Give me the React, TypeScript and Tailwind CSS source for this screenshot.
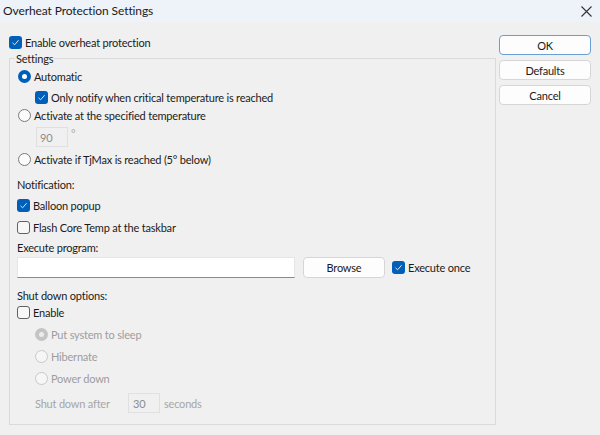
import React from "react";

const Check = ({ checked = false, disabled = false }: { checked?: boolean; disabled?: boolean }) => {
  if (checked) {
    return (
      <span className="flex h-[13px] w-[13px] shrink-0 items-center justify-center rounded-[3px] bg-[#005fb8]">
        <svg width="9" height="9" viewBox="0 0 9 9" fill="none">
          <path d="M1.5 4.8 L3.6 6.8 L7.6 2.2" stroke="#dbe8f5" strokeWidth="1" />
        </svg>
      </span>
    );
  }
  return (
    <span
      className={
        disabled
          ? "h-[13px] w-[13px] shrink-0 rounded-[3px] border border-[#c6c6c6] bg-[#f5f5f5]"
          : "h-[13px] w-[13px] shrink-0 rounded-[3px] border border-[#616161] bg-[#f7f7f7]"
      }
    />
  );
};

const Radio = ({ checked = false, disabled = false }: { checked?: boolean; disabled?: boolean }) => {
  if (checked && !disabled) {
    return (
      <span className="flex h-[13px] w-[13px] shrink-0 items-center justify-center rounded-full bg-[#005fb8]">
        <span className="h-[5px] w-[5px] rounded-full bg-white" />
      </span>
    );
  }
  if (checked && disabled) {
    return (
      <span className="flex h-[13px] w-[13px] shrink-0 items-center justify-center rounded-full bg-[#c4c4c4]">
        <span className="h-[5px] w-[5px] rounded-full bg-[#ececec]" />
      </span>
    );
  }
  return (
    <span
      className={
        disabled
          ? "h-[13px] w-[13px] shrink-0 rounded-full border border-[#c8c8c8] bg-[#f6f6f6]"
          : "h-[13px] w-[13px] shrink-0 rounded-full border border-[#7a7a7a] bg-[#fbfbfb]"
      }
    />
  );
};

const Row = ({ children, className = "" }: { children: React.ReactNode; className?: string }) => (
  <div className={`flex h-[16px] items-center gap-[3px] ${className}`}>{children}</div>
);

const Button = ({ label, primary = false }: { label: string; primary?: boolean }) => (
  <div
    className={
      primary
        ? "flex h-[20px] w-[92px] items-center justify-center rounded-[4px] border border-[#6a9fd6] bg-[#fdfdfd] text-[#1b1b1b]"
        : "flex h-[20px] w-[92px] items-center justify-center rounded-[4px] border border-[#d6d6d6] bg-[#fdfdfd] text-[#1b1b1b]"
    }
  >
    {label}
  </div>
);

export default function App() {
  return (
    <div className="flex h-[435px] w-[600px] flex-col overflow-hidden bg-[#f0f0f0] font-['Lato','Noto_Sans',sans-serif] text-[11px] leading-none tracking-[-0.2px] text-[#1b1b1b]">
      {/* title bar */}
      <div className="flex h-[22px] shrink-0 items-center justify-between bg-[#eef2f9] pl-[3px] pr-[8px]">
        <span className="text-[12px] tracking-[-0.1px]">Overheat Protection Settings</span>
        <svg width="11" height="11" viewBox="0 0 11 11">
          <path d="M0.5 0.5 L10.5 10.5 M10.5 0.5 L0.5 10.5" stroke="#333" strokeWidth="1.1" />
        </svg>
      </div>

      <div className="flex">
        {/* LEFT */}
        <div className="w-[496px] pl-[9px]">
          <Row className="mt-[12px]">
            <Check checked />
            <span>Enable overheat protection</span>
          </Row>

          <div className="relative mt-[8px] h-[367px] border border-[#dadada] pl-[7px] pt-[9px]">
            <span className="absolute left-[5px] top-[-8px] bg-[#f0f0f0] px-[1px] leading-[16px]">Settings</span>

            <Row className="ml-[1px]">
              <Radio checked />
              <span>Automatic</span>
            </Row>
            <Row className="ml-[18px] mt-[5px]">
              <Check checked />
              <span>Only notify when critical temperature is reached</span>
            </Row>
            <Row className="ml-[1px] mt-[2px]">
              <Radio />
              <span>Activate at the specified temperature</span>
            </Row>
            <div className="ml-[19px] mt-[4px] flex h-[20px] items-start">
              <div className="flex h-[20px] w-[32px] items-center border border-[#e0e0e0] bg-[#f0f0f0] pl-[3px] text-[#8c8c8c]">
                90
              </div>
              <span className="ml-[3px] mt-[1px] text-[#a8a8a8]">°</span>
            </div>
            <Row className="ml-[1px] mt-[4px]">
              <Radio />
              <span>Activate if TjMax is reached (5° below)</span>
            </Row>

            <Row className="mt-[9px]">
              <span>Notification:</span>
            </Row>
            <Row className="mt-[5px]">
              <Check checked />
              <span>Balloon popup</span>
            </Row>
            <Row className="mt-[6px]">
              <Check />
              <span>Flash Core Temp at the taskbar</span>
            </Row>

            <Row className="mt-[4px]">
              <span>Execute program:</span>
            </Row>
            <div className="mt-[2px] flex h-[21px] items-center">
              <div className="h-[21px] w-[278px] border border-[#e6e6e6] border-b-[#8a8a8a] bg-white" />
              <div className="ml-[8px] flex h-[21px] w-[82px] items-center justify-center rounded-[4px] border border-[#d6d6d6] bg-[#fdfdfd]">
                Browse
              </div>
              <div className="ml-[7px] flex items-center gap-[3px]">
                <Check checked />
                <span>Execute once</span>
              </div>
            </div>

            <Row className="mt-[9px]">
              <span>Shut down options:</span>
            </Row>
            <Row className="mt-[1px]">
              <Check />
              <span>Enable</span>
            </Row>
            <Row className="ml-[18px] mt-[6px] text-[#9d9d9d]">
              <Radio checked disabled />
              <span>Put system to sleep</span>
            </Row>
            <Row className="ml-[18px] mt-[6px] text-[#9d9d9d]">
              <Radio disabled />
              <span>Hibernate</span>
            </Row>
            <Row className="ml-[18px] mt-[6px] text-[#9d9d9d]">
              <Radio disabled />
              <span>Power down</span>
            </Row>
            <div className="ml-[18px] mt-[7px] flex h-[20px] items-center text-[#a6a6a6]">
              <span className="w-[93px]">Shut down after</span>
              <div className="flex h-[20px] w-[32px] items-center border border-[#e0e0e0] bg-[#f0f0f0] pl-[4px] text-[#8c8c8c]">
                30
              </div>
              <span className="ml-[4px]">seconds</span>
            </div>
          </div>
        </div>

        {/* RIGHT */}
        <div className="ml-[3px] flex flex-col gap-[5px] pt-[13px]">
          <Button label="OK" primary />
          <Button label="Defaults" />
          <Button label="Cancel" />
        </div>
      </div>
    </div>
  );
}
